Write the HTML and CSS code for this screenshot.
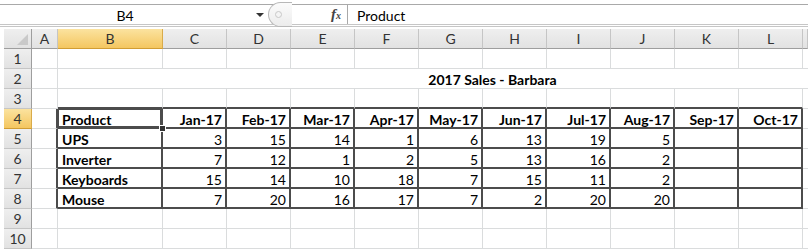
FILE: index.html
```html
<!DOCTYPE html>
<html lang="en">

<head>
    <meta charset="UTF-8">
    <title>2017 Sales - Barbara</title>
    <link rel="stylesheet" href="styles.css">
    <script>
    // build the grid: headers A..L, rows 1..10, table in B4:L8, title merged in row 2
    window.onload = function() {
        var oSheet = document.getElementById('sheet');
        var arrCol = ['A', 'B', 'C', 'D', 'E', 'F', 'G', 'H', 'I', 'J', 'K', 'L', ''];
        var arrMonth = ['Jan-17', 'Feb-17', 'Mar-17', 'Apr-17', 'May-17', 'Jun-17', 'Jul-17', 'Aug-17', 'Sep-17', 'Oct-17'];
        var arrData = [
            ['UPS', 3, 15, 14, 1, 6, 13, 19, 5],
            ['Inverter', 7, 12, 1, 2, 5, 13, 16, 2],
            ['Keyboards', 15, 14, 10, 18, 7, 15, 11, 2],
            ['Mouse', 7, 20, 16, 17, 7, 2, 20, 20]
        ];
        var html = '<div class="hd corner"><i class="tri"></i></div>';

        for (var i = 0; i < arrCol.length; i++) {
            html += '<div class="hd col' + (i == 1 ? ' sel' : '') + '">' + arrCol[i] + '</div>';
        }

        for (var r = 1; r <= 10; r++) {
            html += '<div class="hd row' + (r == 4 ? ' sel' : '') + '">' + r + '</div>';
            if (r == 2) {
                html += '<div class="cell"></div><div class="cell title">2017 Sales - Barbara</div>';
                continue;
            }
            for (var c = 0; c < arrCol.length; c++) {
                var cls = 'cell';
                var txt = '';
                var inTable = r >= 4 && r <= 8 && c >= 1 && c <= 11;
                if (inTable) {
                    cls += ' tb';
                    if (r == 4) {
                        if (c == 1) {
                            txt = 'Product';
                            cls += ' name active';
                        } else {
                            txt = arrMonth[c - 2];
                            cls += ' num bold';
                        }
                    } else {
                        var row = arrData[r - 5];
                        if (c == 1) {
                            txt = row[0];
                            cls += ' name';
                        } else {
                            txt = row[c - 1] === undefined ? '' : row[c - 1];
                            cls += ' num';
                        }
                    }
                }
                if (r == 3 && c >= 1 && c <= 11) cls += ' above';
                if (c == 0 && r >= 4 && r <= 8) cls += ' before';
                if (cls.indexOf('active') > -1) txt += '<i class="handle"></i>';
                html += '<div class="' + cls + '">' + txt + '</div>';
            }
        }
        oSheet.innerHTML = html;
    }
    </script>
</head>

<body>
    <div class="formula-bar">
        <div class="name-box">
            <span class="name-text">B4</span>
            <span class="arrow"></span>
        </div>
        <div class="fx-area">
            <span class="pill"><i class="knob"></i></span>
            <span class="fx">f<small>x</small></span>
        </div>
        <div class="formula">Product</div>
    </div>
    <div class="sep"></div>
    <div id="sheet" class="sheet"></div>
</body>

</html>
```

FILE: styles.css
```css
* {
    margin: 0;
    padding: 0;
    box-sizing: border-box;
}

body {
    width: 808px;
    height: 251px;
    overflow: hidden;
    background: #fff;
    color: #000;
    font-family: Lato, "Liberation Sans", sans-serif;
    font-size: 14px;
}

/* formula bar */
.formula-bar {
    display: flex;
    height: 21px;
    margin-top: 4px;
    border-top: 1px solid #a9a9a9;
    border-bottom: 1px solid #c6c6c6;
}

.name-box {
    display: flex;
    align-items: center;
    width: 268px;
}

.name-text {
    width: 250px;
    padding-top: 2px;
    text-align: center;
}

.arrow {
    width: 0;
    height: 0;
    margin-left: 6px;
    border-left: 4px solid transparent;
    border-right: 4px solid transparent;
    border-top: 4px solid #333;
}

.fx-area {
    display: flex;
    align-items: center;
    width: 80px;
    border-right: 1px solid #a9a9a9;
}

.pill {
    display: flex;
    align-items: center;
    width: 24px;
    height: 25px;
    margin-top: -2px;
    margin-bottom: -2px;
    border: 1px solid #b8b8b8;
    border-right: none;
    border-radius: 13px 0 0 13px;
    background: linear-gradient(#fbfbfb, #ececec);
}

.knob {
    display: block;
    width: 7px;
    height: 7px;
    margin-left: 6px;
    border: 1px solid #c8c8c8;
    border-radius: 50%;
    background: #f4f4f4;
}

.fx {
    margin-left: 39px;
    font-family: "Liberation Serif", serif;
    font-style: italic;
    font-weight: bold;
    font-size: 15px;
    color: #444;
}

.fx small {
    font-size: 10px;
}

.formula {
    flex: 1;
    padding: 2px 0 0 9px;
    line-height: 18px;
}

.sep {
    height: 2px;
    margin-bottom: 2px;
    border-bottom: 1px solid #c6c6c6;
}

/* sheet grid */
.sheet {
    display: grid;
    grid-template-columns: 28px 26px 105px repeat(10, 64px) 5px;
    grid-auto-rows: 20px;
    margin-left: 4px;
}

.hd {
    background: linear-gradient(#efefef, #e2e2e2);
    border-right: 1px solid #c5c5c5;
    border-bottom: 1px solid #c5c5c5;
    padding-top: 1px;
    color: #333;
    text-align: center;
    line-height: 18px;
}

.hd.col {
    border-bottom-color: #9e9e9e;
}

.hd.row {
    border-right-color: #9e9e9e;
}

.hd.corner {
    position: relative;
    border-right-color: #9e9e9e;
    border-bottom-color: #9e9e9e;
}

.tri {
    position: absolute;
    right: 3px;
    bottom: 3px;
    width: 0;
    height: 0;
    border-left: 11px solid transparent;
    border-bottom: 11px solid #c9c9c9;
}

.hd.sel {
    background: linear-gradient(#fbe39f, #f4c660);
    border-right-color: #d9ab4a;
    border-bottom-color: #d19d33;
}

.cell {
    border-right: 1px solid #dadcdd;
    border-bottom: 1px solid #dadcdd;
    padding: 2px 3px 0;
    line-height: 17px;
    white-space: nowrap;
}

.tb {
    border-right: 2px solid #4c4c4c;
    border-bottom: 2px solid #4c4c4c;
}

.above {
    border-bottom: 2px solid #4c4c4c;
}

.before {
    border-right: 2px solid #4c4c4c;
}

.num {
    text-align: right;
}

.bold,
.name {
    font-weight: bold;
}

.name {
    padding-left: 4px;
}

.title {
    grid-column: span 12;
    border-right: none;
    padding-left: 122px;
    text-align: center;
    font-weight: bold;
}

.active {
    position: relative;
    box-shadow: inset 0 0 0 1px #4c4c4c;
}

.handle {
    position: absolute;
    right: -5px;
    bottom: -5px;
    width: 7px;
    height: 7px;
    background: #333;
    border: 1px solid #fff;
}
```
